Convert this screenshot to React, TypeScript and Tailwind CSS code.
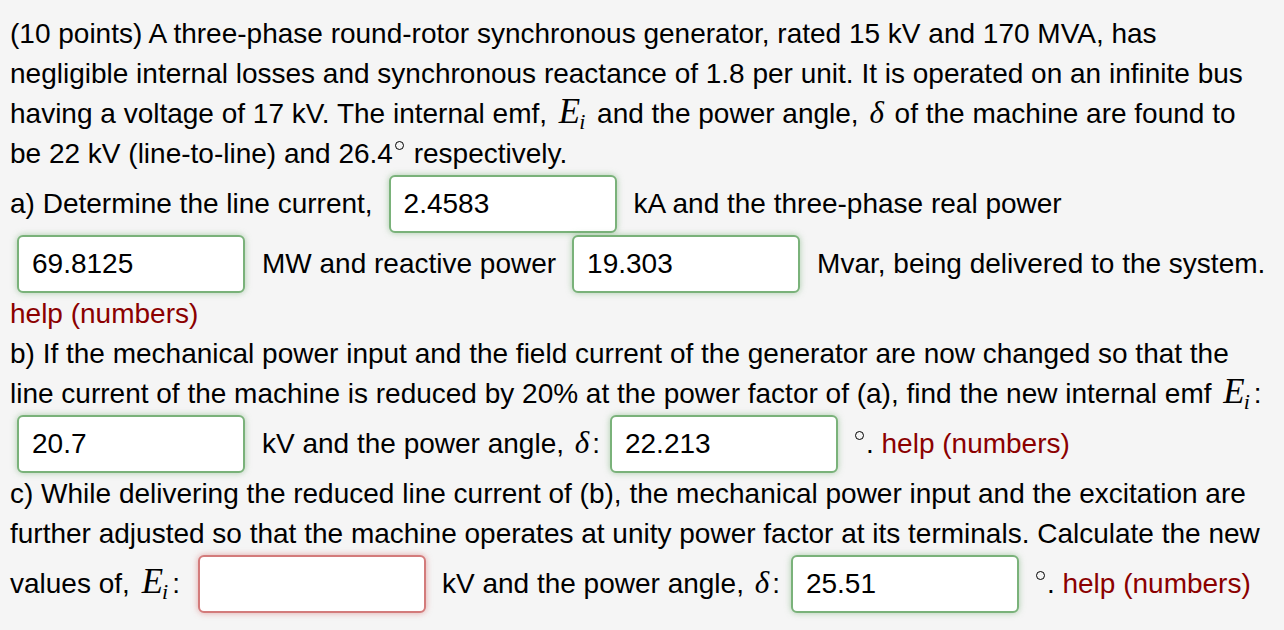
import React from 'react';

const Ei = () => (
    <span className="inline-block leading-[0] ml-[4px] mr-[4px]">
        <span className="font-['Liberation_Serif',serif] italic text-[35px]">E</span>
        <span className="font-['Liberation_Serif',serif] italic text-[22px] relative top-[6px] -ml-[1px]">i</span>
    </span>
);

const Delta = () => (
    <span className="inline-block leading-[0] font-['Liberation_Serif',serif] italic text-[31px] mx-[3px]">δ</span>
);

const Deg = () => (
    <span className="inline-block w-[9px] h-[9px] rounded-full border-[1.5px] border-black relative -top-[13px] mx-[2px]" />
);

interface AnsProps {
    value?: string;
    bad?: boolean;
    className?: string;
}

const Ans = ({ value = '', bad = false, className = '' }: AnsProps) => (
    <input
        readOnly
        value={value}
        className={
            'w-[228px] h-[58px] shrink-0 rounded-[6px] bg-white pl-[13px] text-[28px] text-black outline-none border-2 ' +
            (bad
                ? 'border-[#d37b7b] shadow-[0_0_6px_rgba(210,100,100,0.55)] '
                : 'border-[#7ab27a] shadow-[0_0_6px_rgba(110,170,110,0.55)] ') +
            className
        }
    />
);

const Help = () => <span className="text-[#8b0000]">help (numbers)</span>;

const Line = ({ children }: { children: React.ReactNode }) => (
    <div className="h-[40px] flex items-center">
        <span>{children}</span>
    </div>
);

export default function App() {
    return (
        <div className="min-h-[630px] bg-[#f5f5f5] text-black font-['Liberation_Sans',Arial,sans-serif] text-[28px] leading-[40px] px-[10px] pt-[14px] whitespace-nowrap">
            <Line>(10 points) A three-phase round-rotor synchronous generator, rated 15 kV and 170 MVA, has</Line>
            <Line>negligible internal losses and synchronous reactance of 1.8 per unit. It is operated on an infinite bus</Line>
            <Line>
                having a voltage of 17 kV. The internal emf, <Ei /> and the power angle, <Delta /> of the machine are found to
            </Line>
            <Line>
                be 22 kV (line-to-line) and 26.4<Deg /> respectively.
            </Line>

            <div className="flex items-center h-[60px]">
                <span>a) Determine the line current,</span>
                <Ans value="2.4583" className="ml-[16px] mr-[17px]" />
                <span>kA and the three-phase real power</span>
            </div>
            <div className="flex items-center h-[60px]">
                <Ans value="69.8125" className="ml-[7px] mr-[17px]" />
                <span>MW and reactive power</span>
                <Ans value="19.303" className="ml-[16px] mr-[17px]" />
                <span>Mvar, being delivered to the system.</span>
            </div>
            <Line>
                <Help />
            </Line>

            <Line>b) If the mechanical power input and the field current of the generator are now changed so that the</Line>
            <Line>
                line current of the machine is reduced by 20% at the power factor of (a), find the new internal emf <Ei />:
            </Line>
            <div className="flex items-center h-[60px]">
                <Ans value="20.7" className="ml-[7px] mr-[17px]" />
                <span>
                    kV and the power angle, <Delta />:
                </span>
                <Ans value="22.213" className="ml-[10px] mr-[15px]" />
                <span>
                    <Deg />. <Help />
                </span>
            </div>

            <Line>c) While delivering the reduced line current of (b), the mechanical power input and the excitation are</Line>
            <Line>further adjusted so that the machine operates at unity power factor at its terminals. Calculate the new</Line>
            <div className="flex items-center h-[60px]">
                <span>
                    values of, <Ei />:
                </span>
                <Ans bad className="ml-[18px] mr-[16px]" />
                <span>
                    kV and the power angle, <Delta />:
                </span>
                <Ans value="25.51" className="ml-[11px] mr-[15px]" />
                <span>
                    <Deg />. <Help />
                </span>
            </div>
        </div>
    );
}
